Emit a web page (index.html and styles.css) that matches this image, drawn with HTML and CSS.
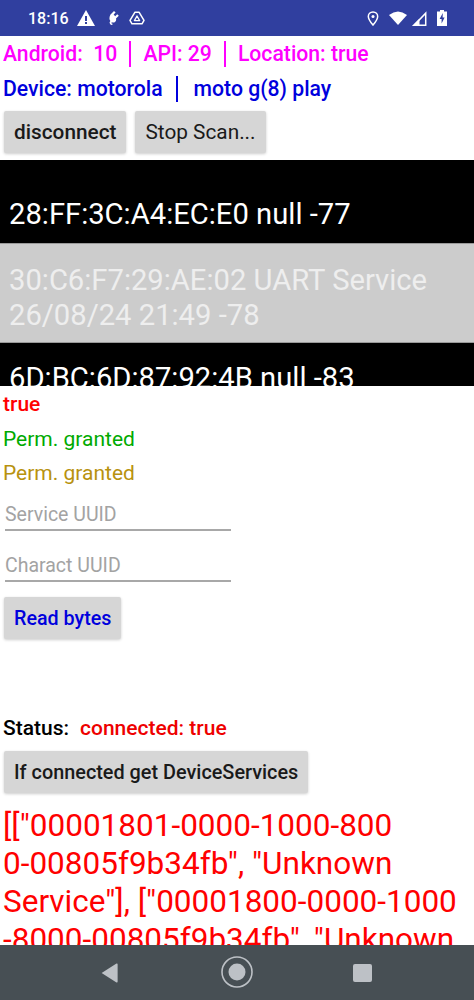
FILE: index.html
```html
<!DOCTYPE html>
<html lang="en">

<head>
   <meta charset="UTF-8">
   <meta name="viewport" content="width=device-width, initial-scale=1.0">
   <title>BLE Scanner</title>
   <link rel="stylesheet" href="styles.css">
</head>

<body>
   <div class="phone">
      <div class="status__bar">
         <span class="status__time">18:16</span>
         <svg class="status__icon icon__warning" viewBox="0 0 18 16"><path fill="#fff" fill-rule="evenodd" d="M9 0 18 16H0ZM8 6v5h2V6ZM8 12v2h2v-2Z"/></svg>
         <svg class="status__icon icon__plug" viewBox="0 0 12 14"><path fill="#fff" d="M3.5 3.5 7 0 8.6 1.6 6.6 3.6 8.2 5.2 10.2 3.2 11.8 4.8 9 7.6Q9.6 9.6 8 11 6.4 12 5 11.2L4.4 11.8Q4.2 12.6 5.4 12.6V14Q2.4 14.2 2.6 11.2L3.4 10Q1.4 7.6 3.5 3.5Z"/></svg>
         <svg class="status__icon icon__drive" viewBox="0 0 16 14"><path fill="none" stroke="#fff" stroke-width="1.5" stroke-linejoin="round" d="M6 1.2h4L15 9.4 13 12.8H3L1 9.4Z"/><path fill="none" stroke="#fff" stroke-width="1.3" stroke-linejoin="round" d="M8 5 10.6 9.6H5.4Z"/></svg>
         <div class="status__right">
            <svg class="status__icon icon__pin" viewBox="0 0 12 16"><path fill="none" stroke="#fff" stroke-width="1.6" d="M6 1C3 1 1 3.2 1 5.8 1 9 6 15 6 15S11 9 11 5.8C11 3.2 9 1 6 1Z"/><circle cx="6" cy="5.8" r="1.6" fill="#fff"/></svg>
            <svg class="status__icon icon__wifi" viewBox="0 0 18 14"><path fill="#fff" d="M0 4Q9-3 18 4L9 14Z"/></svg>
            <svg class="status__icon icon__signal" viewBox="0 0 14 14"><path fill="none" stroke="#fff" stroke-width="1.4" d="M12.8 2V13.2H2Z"/><path fill="#fff" d="M0 14 7 7V14Z"/></svg>
            <svg class="status__icon icon__battery" viewBox="0 0 10 16"><path fill="#fff" fill-rule="evenodd" d="M3 0H7V1.5H10V16H0V1.5H3ZM5.8 3 2.6 9H4.6V13.5L7.6 7.5H5.6Z"/></svg>
         </div>
      </div>

      <div class="info__row info__magenta">
         <span>Android:&nbsp; 10</span>
         <span class="divider"></span>
         <span>API: 29</span>
         <span class="divider"></span>
         <span>Location: true</span>
      </div>

      <div class="info__row info__blue">
         <span>Device: motorola</span>
         <span class="divider"></span>
         <span class="device__model">moto g(8) play</span>
      </div>

      <div class="button__row">
         <button class="btn btn__large btn__bold">disconnect</button>
         <button class="btn btn__large">Stop Scan...</button>
      </div>

      <div class="device__list">
         <div class="device device__first">28:FF:3C:A4:EC:E0 null -77</div>
         <div class="device device__active">30:C6:F7:29:AE:02 UART Service 26/08/24 21:49 -78</div>
         <div class="device device__last">6D:BC:6D:87:92:4B null -83</div>
      </div>

      <div class="scan__state">true</div>
      <div class="perm perm__green">Perm. granted</div>
      <div class="perm perm__gold">Perm. granted</div>

      <input class="uuid__input" type="text" placeholder="Service UUID">
      <input class="uuid__input" type="text" placeholder="Charact UUID">

      <button class="btn btn__bold btn__read">Read bytes</button>

      <div class="status__line">
         <span>Status:</span>
         <span class="status__value">connected: true</span>
      </div>

      <button class="btn btn__bold btn__services">If connected get DeviceServices</button>

      <div class="services">[["00001801-0000-1000-800<br>0-00805f9b34fb", "Unknown<br>Service"], ["00001800-0000-1000<br>-8000-00805f9b34fb", "Unknown</div>

      <div class="nav__bar">
         <svg class="nav__back" viewBox="0 0 17 20"><path fill="#bdc1c6" d="M0.6 10 15.5 0.6Q16.6 0 16.6 1.4V18.6Q16.6 20 15.5 19.4Z"/></svg>
         <svg class="nav__home" viewBox="0 0 32 32"><circle cx="16" cy="16" r="15" fill="none" stroke="#bdc1c6" stroke-width="1.6"/><circle cx="16" cy="16" r="8.5" fill="#bdc1c6"/></svg>
         <div class="nav__recent"></div>
      </div>
   </div>
</body>

</html>
```

FILE: styles.css
```css
* {
   font-family: Roboto, sans-serif;
   box-sizing: border-box;
   padding: 0;
   margin: 0;
}

body {
   background-color: #fff;
}

.phone {
   width: 474px;
   height: 1000px;
   overflow: hidden;
   position: relative;
}

.status__bar {
   height: 36px;
   background-color: #303f9f;
   color: #fff;
   display: flex;
   align-items: center;
   padding-left: 28px;
   padding-right: 27px;
}

.status__time {
   width: 38px;
   font-size: 16px;
   font-weight: 500;
   margin-right: 11px;
   white-space: nowrap;
}

.status__icon {
   display: block;
}

.icon__warning {
   width: 18px;
   height: 16px;
   margin-right: 12px;
}

.icon__plug {
   width: 12px;
   height: 14px;
   margin-right: 10px;
}

.icon__drive {
   width: 16px;
   height: 14px;
}

.status__right {
   margin-left: auto;
   display: flex;
   align-items: center;
}

.icon__pin {
   width: 12px;
   height: 15px;
   margin-right: 10px;
}

.icon__wifi {
   width: 18px;
   height: 14px;
   margin-right: 5px;
}

.icon__signal {
   width: 15px;
   height: 15px;
   margin-right: 10px;
}

.icon__battery {
   width: 10px;
   height: 16px;
}

.info__row {
   display: flex;
   align-items: center;
   height: 35px;
   padding-left: 3px;
   font-size: 21.2px;
   font-weight: 500;
}

.info__magenta {
   color: #f0f;
}

.info__blue {
   color: #00d;
}

.divider {
   width: 2px;
   height: 26px;
   background-color: currentColor;
   margin-left: 12px;
   margin-right: 12px;
}

.info__blue .divider {
   margin-left: 13px;
}

.device__model {
   margin-left: 4px;
}

.button__row {
   display: flex;
   gap: 9px;
   padding-left: 4px;
   padding-top: 5px;
   height: 54px;
}

.btn {
   display: block;
   height: 42px;
   padding: 0 10px;
   border: none;
   border-radius: 2px;
   background-color: #d6d6d6;
   color: #1a1a1a;
   font-size: 19.7px;
   box-shadow: 0 1px 3px rgba(0, 0, 0, 0.2);
}

.btn__large {
   font-size: 20.8px;
}

.btn__bold {
   font-weight: 500;
}

.device__list {
   height: 226px;
   overflow: hidden;
   background-color: #000;
}

.device {
   color: #fff;
   font-size: 29.2px;
   line-height: 35px;
   padding: 14px 9px;
}

.device__first {
   padding-top: 37px;
   padding-bottom: 11px;
}

.device__active {
   color: #eee;
   background-color: #ccc;
   border-top: 1px solid #999;
   border-bottom: 1px solid #999;
   padding-top: 19px;
   padding-bottom: 9px;
}

.device__last {
   padding-top: 18px;
}

.scan__state {
   color: #f00;
   font-size: 21px;
   font-weight: 500;
   line-height: 36px;
   padding-left: 3px;
}

.perm {
   font-size: 21px;
   line-height: 34px;
   padding-left: 3px;
}

.perm__green {
   color: #0a0;
}

.perm__gold {
   color: #b8920f;
}

.uuid__input {
   display: block;
   width: 226px;
   height: 41px;
   padding-top: 9px;
   margin-left: 5px;
   margin-bottom: 10px;
   border: none;
   border-bottom: 2px solid #a8a8a8;
   outline: none;
   font-size: 19.5px;
   background: transparent;
}

.uuid__input::placeholder {
   color: #a3a3a3;
}

.btn__read {
   margin-top: 15px;
   margin-left: 4px;
   color: #00d;
}

.status__line {
   margin-top: 74px;
   padding-left: 3px;
   font-size: 21px;
   font-weight: 500;
   line-height: 30px;
   display: flex;
   gap: 11px;
   color: #000;
}

.status__value {
   color: #e00;
}

.btn__services {
   margin-top: 8px;
   margin-left: 4px;
   font-size: 19.85px;
}

.services {
   margin-top: 14px;
   padding-left: 3px;
   color: #f00;
   font-size: 31.5px;
   line-height: 38px;
}

.nav__bar {
   position: absolute;
   left: 0;
   right: 0;
   bottom: 0;
   height: 55px;
   background-color: #474f54;
}

.nav__back {
   position: absolute;
   left: 101px;
   top: 18px;
   width: 17px;
   height: 20px;
}

.nav__home {
   position: absolute;
   left: 221px;
   top: 11px;
   width: 32px;
   height: 32px;
}

.nav__recent {
   position: absolute;
   left: 353px;
   top: 19px;
   width: 19px;
   height: 18px;
   border-radius: 2px;
   background-color: #bdc1c6;
}
```
